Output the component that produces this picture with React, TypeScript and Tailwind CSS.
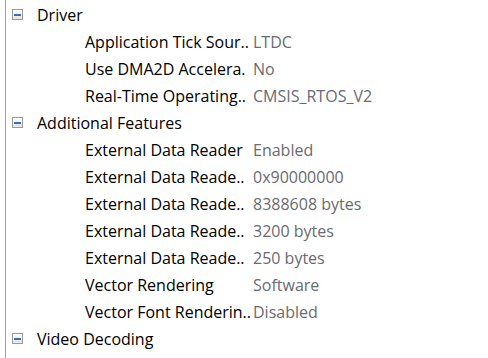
import React from 'react';

type Row = { label: string; value: string };
type Group = { title: string; rows: Row[] };

const groups: Group[] = [
  {
    title: 'Driver',
    rows: [
      { label: 'Application Tick Sour..', value: 'LTDC' },
      { label: 'Use DMA2D Accelera.', value: 'No' },
      { label: 'Real-Time Operating..', value: 'CMSIS_RTOS_V2' },
    ],
  },
  {
    title: 'Additional Features',
    rows: [
      { label: 'External Data Reader', value: 'Enabled' },
      { label: 'External Data Reade..', value: '0x90000000' },
      { label: 'External Data Reade..', value: '8388608 bytes' },
      { label: 'External Data Reade..', value: '3200 bytes' },
      { label: 'External Data Reade..', value: '250 bytes' },
      { label: 'Vector Rendering', value: 'Software' },
      { label: 'Vector Font Renderin..', value: 'Disabled' },
    ],
  },
  { title: 'Video Decoding', rows: [] },
];

function Toggle() {
  return (
    <span className="flex h-[11px] w-[11px] items-center justify-center border border-[#9a9a9a] bg-gradient-to-b from-[#ffffff] to-[#e4e4e4]">
      <span className="h-[2px] w-[7px] bg-[#3c6cb4]" />
    </span>
  );
}

export default function App() {
  return (
    <div className="h-[358px] w-[488px] bg-white font-['Open_Sans',sans-serif] text-[16px] text-black">
      <div className="ml-[5px] h-full border-l border-[#a0a0a0] pt-[1px]">
        {groups.map((g) => (
          <div key={g.title}>
            <div className="flex h-[27px] items-center">
              <span className="ml-[6px]">
                <Toggle />
              </span>
              <span className="ml-[14px]">{g.title}</span>
            </div>
            {g.rows.map((r, i) => (
              <div key={i} className="flex h-[27px] items-center whitespace-nowrap">
                <span className="ml-[79px] min-w-[168px] pr-[1px]">{r.label}</span>
                <span className="text-[#6a6a70]">{r.value}</span>
              </div>
            ))}
          </div>
        ))}
      </div>
    </div>
  );
}
